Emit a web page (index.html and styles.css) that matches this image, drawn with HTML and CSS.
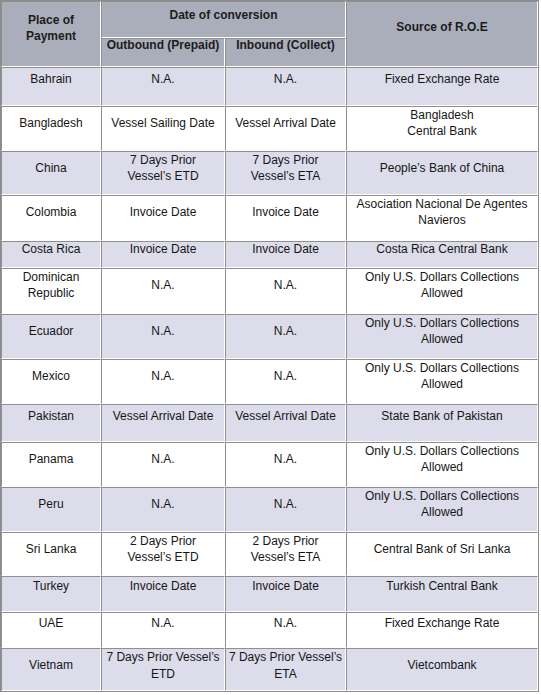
FILE: index.html
```html
<!DOCTYPE html>
<html>
<head>
<meta charset="utf-8">
<link rel="stylesheet" href="styles.css">
</head>
<body>
<table class="roe">
  <colgroup>
    <col class="c1"><col class="c2"><col class="c3"><col class="c4">
  </colgroup>
  <thead>
    <tr class="h1">
      <th rowspan="2" class="place">Place of<br>Payment</th>
      <th colspan="2" class="doc">Date of conversion</th>
      <th rowspan="2" class="src">Source of R.O.E</th>
    </tr>
    <tr class="h2">
      <th>Outbound (Prepaid)</th>
      <th>Inbound (Collect)</th>
    </tr>
  </thead>
  <tbody>
    <tr class="h39 p15"><td>Bahrain</td><td>N.A.</td><td>N.A.</td><td>Fixed Exchange Rate</td></tr>
    <tr class="h45 p11"><td>Bangladesh</td><td>Vessel Sailing Date</td><td>Vessel Arrival Date</td><td>Bangladesh<br>Central Bank</td></tr>
    <tr class="h44 p10"><td>China</td><td>7 Days Prior<br>Vessel’s ETD</td><td>7 Days Prior<br>Vessel’s ETA</td><td>People’s Bank of China</td></tr>
    <tr class="h46 p12"><td>Colombia</td><td>Invoice Date</td><td>Invoice Date</td><td>Asociation Nacional De Agentes<br>Navieros</td></tr>
    <tr class="h27 p11 tight"><td>Costa Rica</td><td>Invoice Date</td><td>Invoice Date</td><td>Costa Rica Central Bank</td></tr>
    <tr class="h46 p12"><td>Dominican<br>Republic</td><td>N.A.</td><td>N.A.</td><td>Only U.S. Dollars Collections<br>Allowed</td></tr>
    <tr class="h45 p11"><td>Ecuador</td><td>N.A.</td><td>N.A.</td><td>Only U.S. Dollars Collections<br>Allowed</td></tr>
    <tr class="h45 p11"><td>Mexico</td><td>N.A.</td><td>N.A.</td><td>Only U.S. Dollars Collections<br>Allowed</td></tr>
    <tr class="h38 p14"><td>Pakistan</td><td>Vessel Arrival Date</td><td>Vessel Arrival Date</td><td>State Bank of Pakistan</td></tr>
    <tr class="h45 p11"><td>Panama</td><td>N.A.</td><td>N.A.</td><td>Only U.S. Dollars Collections<br>Allowed</td></tr>
    <tr class="h45 p11"><td>Peru</td><td>N.A.</td><td>N.A.</td><td>Only U.S. Dollars Collections<br>Allowed</td></tr>
    <tr class="h44 p10"><td>Sri Lanka</td><td>2 Days Prior<br>Vessel’s ETD</td><td>2 Days Prior<br>Vessel’s ETA</td><td>Central Bank of Sri Lanka</td></tr>
    <tr class="h36 p16"><td>Turkey</td><td>Invoice Date</td><td>Invoice Date</td><td>Turkish Central Bank</td></tr>
    <tr class="h36 p14"><td>UAE</td><td>N.A.</td><td>N.A.</td><td>Fixed Exchange Rate</td></tr>
    <tr class="h43 p8 loose"><td>Vietnam</td><td>7 Days Prior Vessel’s<br>ETD</td><td>7 Days Prior Vessel’s<br>ETA</td><td>Vietcombank</td></tr>
  </tbody>
</table>
</body>
</html>
```

FILE: styles.css
```css
html, body {
  margin: 0;
  padding: 0;
  background: #ffffff;
}

.roe {
  width: 539px;
  table-layout: fixed;
  border-collapse: separate;
  border-spacing: 0;
  border: 1px solid #8c8c8c;
  font-family: "Liberation Sans", Arial, sans-serif;
  font-size: 12px;
  line-height: 16px;
  color: #161616;
}

.c1 { width: 100px; }
.c2 { width: 124px; }
.c3 { width: 121px; }
.c4 { width: 192px; }

.roe th,
.roe td {
  box-sizing: border-box;
  border: 1px solid;
  border-color: #8f8f8f #ffffff #ffffff #8f8f8f;
  padding: 0 1px 12px;
  text-align: center;
  vertical-align: middle;
  overflow: hidden;
}

.roe th {
  background: #aaadba;
  font-weight: bold;
  color: #1c1c1c;
}

/* header rows */
.h1 { height: 37px; }
.h2 { height: 29px; }
.roe th.doc { padding-bottom: 9px; }
.roe th.place { padding-bottom: 13px; }
.roe th.src { padding-bottom: 14px; }
.roe .h2 th { line-height: 12px; padding-bottom: 15px; }

/* zebra body */
.roe tbody tr:nth-child(odd) td { background: #dcdcea; }
.roe tbody tr:nth-child(even) td { background: #ffffff; }

/* row heights */
.h27 { height: 27px; }
.h36 { height: 36px; }
.h38 { height: 38px; }
.h39 { height: 39px; }
.h43 { height: 43px; }
.h44 { height: 44px; }
.h45 { height: 45px; }
.h46 { height: 46px; }

/* vertical placement of the text inside rows */
.roe tr.p8 td { padding-bottom: 8px; }
.roe tr.p10 td { padding-bottom: 10px; }
.roe tr.p11 td { padding-bottom: 11px; }
.roe tr.p12 td { padding-bottom: 12px; }
.roe tr.p14 td { padding-bottom: 14px; }
.roe tr.p15 td { padding-bottom: 15px; }
.roe tr.p16 td { padding-bottom: 16px; }
.roe tr.tight td { line-height: 12px; }
.roe tr.loose td { line-height: 16.5px; }
```
